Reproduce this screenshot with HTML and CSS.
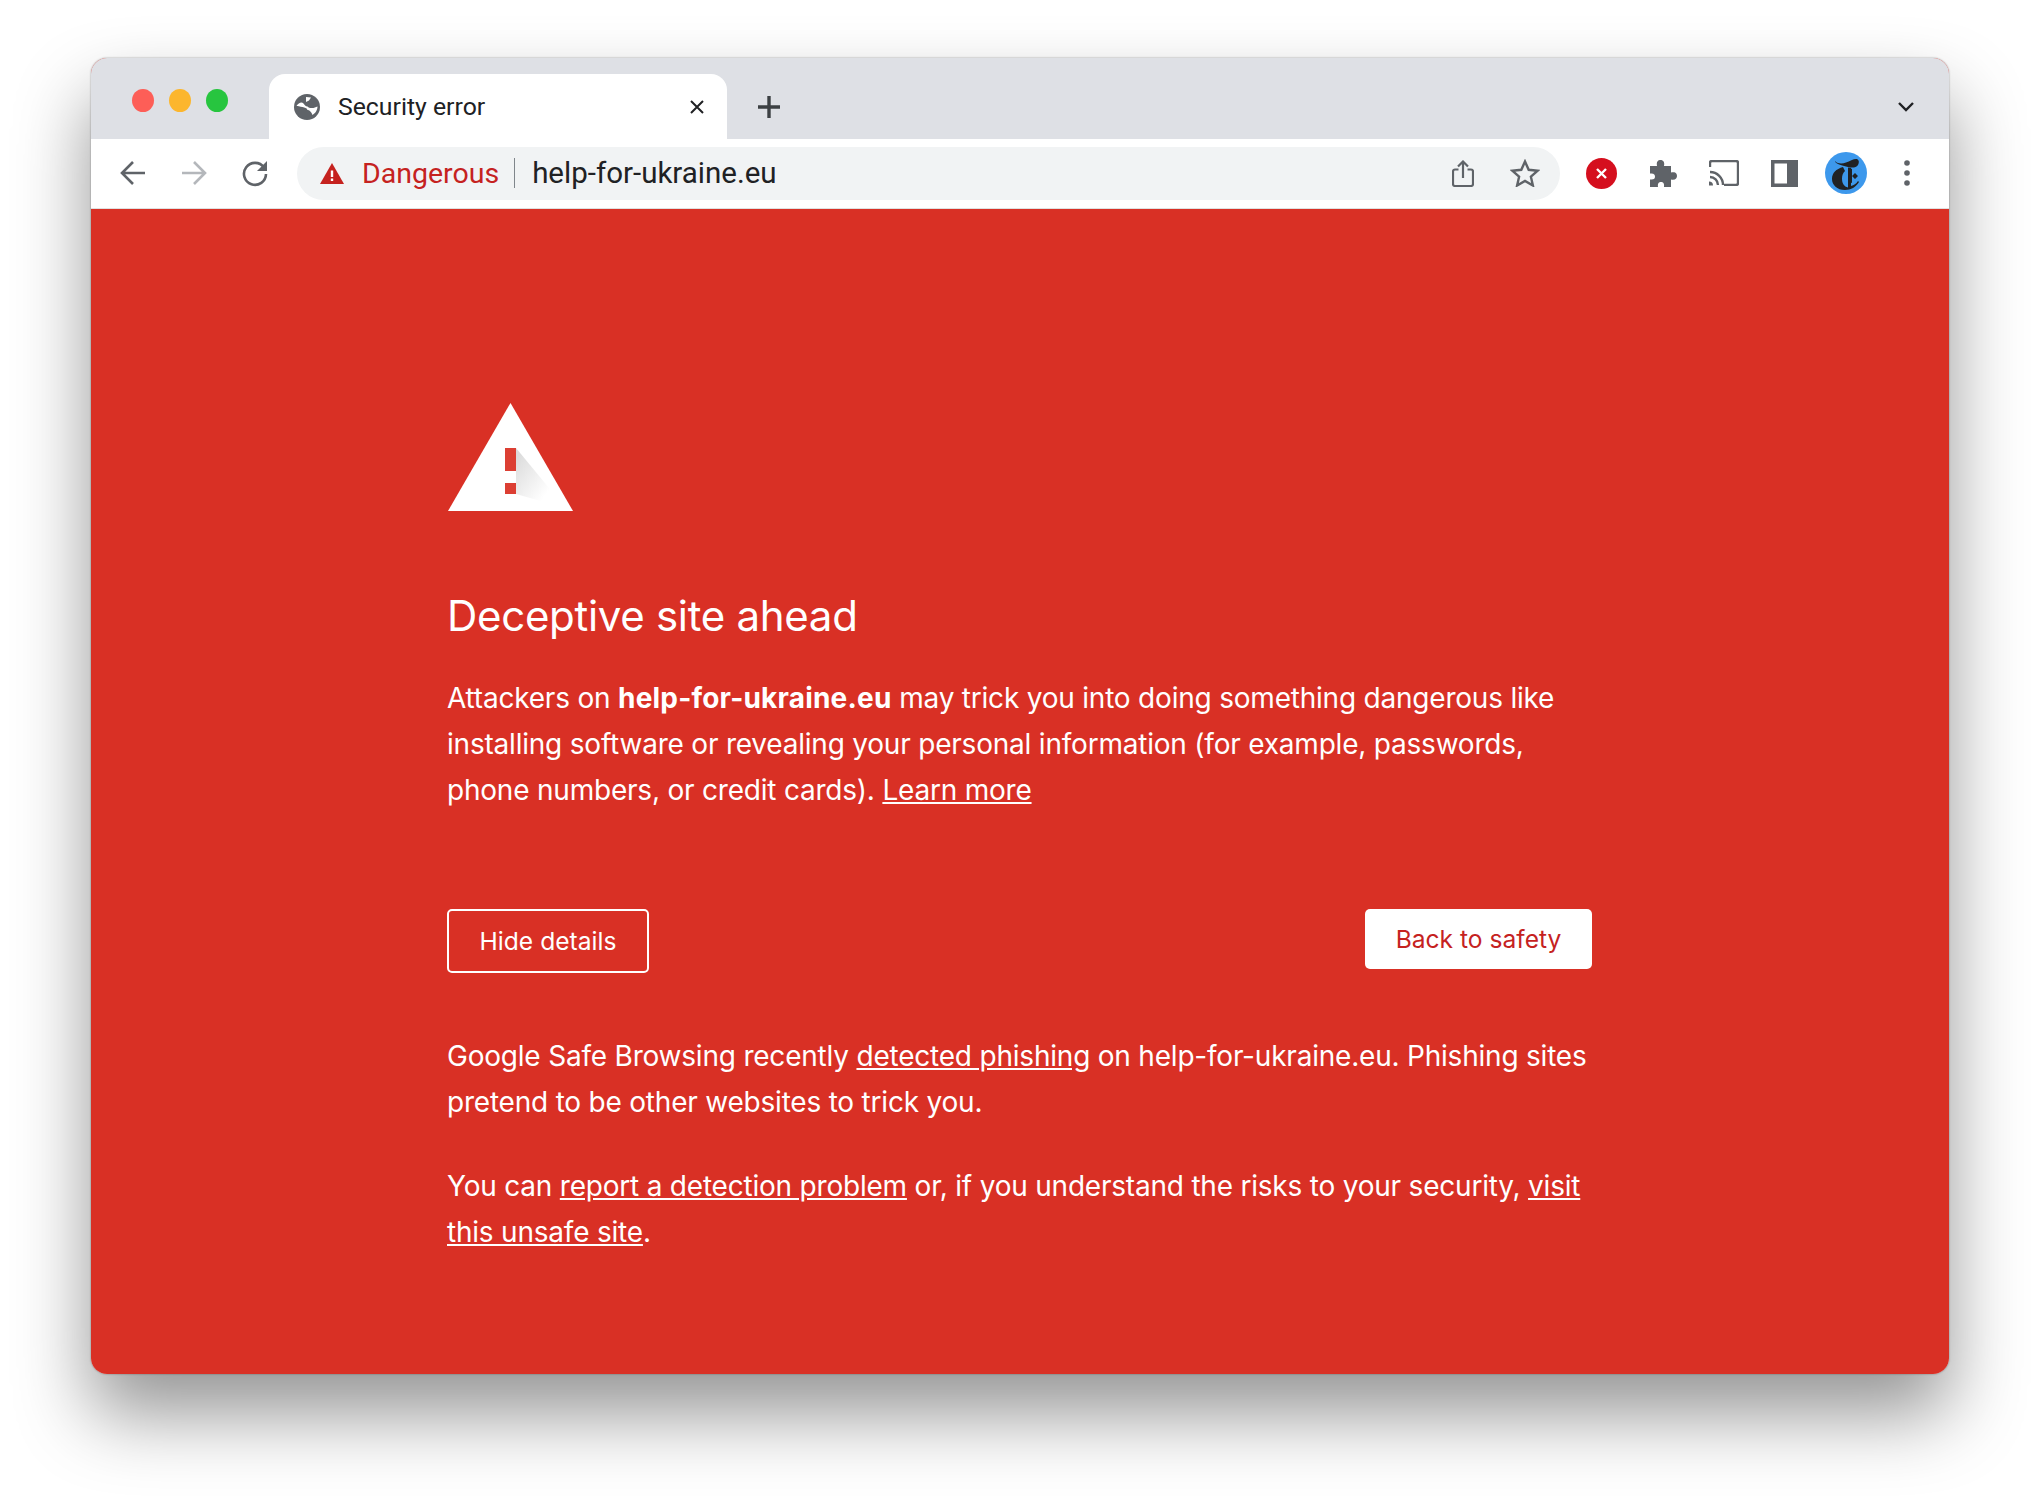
FILE: index.html
```html
<!DOCTYPE html>
<html lang="en">
<head>
    <meta charset="UTF-8">
    <title>Security error</title>
    <link rel="stylesheet" href="styles.css">
</head>
<body>
    <div class="window">
        <div class="tabstrip">
            <div class="lights">
                <span class="light red"></span>
                <span class="light yellow"></span>
                <span class="light green"></span>
            </div>
            <div class="tab">
                <svg class="globe" viewBox="0 0 26 26">
                    <circle cx="13" cy="13" r="13" fill="#5f6368"/>
                    <path d="M2.500 12c2-3 5-4.500 7-2.500 1 1 2 3 4 3 1.500 2 4 1.500 6 1.500l4-1.500c0 4-2.500 7-5 8.500-1-3-3-5-5-5-1-2.500-2.500-2-5-3-2.500-.5-5-1-6-1z" fill="#fff"/>
                    <path d="M12 3l5 .5-2 3-3 1.500z" fill="#fff"/>
                </svg>
                <span class="tab-title">Security error</span>
                <svg class="tab-close" viewBox="0 0 16 16">
                    <path d="M2 2l12 12M14 2L2 14" stroke="#202124" stroke-width="2" fill="none"/>
                </svg>
            </div>
            <svg class="new-tab" viewBox="0 0 24 24">
                <path d="M12 1v22M1 12h22" stroke="#3c4043" stroke-width="3.400" fill="none"/>
            </svg>
            <svg class="tab-search" viewBox="0 0 18 12">
                <path d="M2 2l7 7 7-7" stroke="#202124" stroke-width="2.400" fill="none"/>
            </svg>
        </div>

        <div class="toolbar">
            <div class="btn">
                <svg width="26" height="26" viewBox="0 0 26 26"><path d="M25 13H2M13 2L2 13l11 11" stroke="#5f6368" stroke-width="2.600" fill="none"/></svg>
            </div>
            <div class="btn">
                <svg width="26" height="26" viewBox="0 0 26 26"><path d="M1 13h23M13 2l11 11-11 11" stroke="#b4b7bb" stroke-width="2.600" fill="none"/></svg>
            </div>
            <div class="btn">
                <svg width="28" height="28" viewBox="0 0 28 28"><path d="M23 8.500A11 11 0 1 0 25 15" stroke="#5f6368" stroke-width="2.600" fill="none"/><path d="M26 2v10H16z" fill="#5f6368"/></svg>
            </div>

            <div class="omnibox">
                <svg class="warn" viewBox="0 0 24 21">
                    <path d="M12 0l12 21H0z" fill="#c5221f"/>
                    <path d="M10.800 7.500h2.400v6.500h-2.400zM10.800 15.500h2.400v2.500h-2.400z" fill="#fff"/>
                </svg>
                <span class="danger">Dangerous</span>
                <span class="sep"></span>
                <span class="url">help-for-ukraine.eu</span>
                <svg class="omni-icon share" width="22" height="27" viewBox="0 0 22 27">
                    <path d="M6.500 9.500H3a2 2 0 0 0-2 2V24a2 2 0 0 0 2 2h16a2 2 0 0 0 2-2V11.500a2 2 0 0 0-2-2h-3.500M11 18V2M6 6.500L11 1.500l5 5" stroke="#5f6368" stroke-width="2.200" fill="none"/>
                </svg>
                <svg class="omni-icon star" width="30" height="28" viewBox="0 0 30 28">
                    <path d="M15 2.500l3.700 8.300 9 .9-6.800 6 2 8.800-7.900-4.600-7.900 4.600 2-8.800-6.800-6 9-.9z" stroke="#5f6368" stroke-width="2.400" fill="none"/>
                </svg>
            </div>

            <div class="btn">
                <svg width="31" height="31" viewBox="0 0 31 31"><circle cx="15.500" cy="15.500" r="15.500" fill="#d50f1e"/><path d="M11 11l9 9M20 11l-9 9" stroke="#fff" stroke-width="2.400" fill="none"/></svg>
            </div>
            <div class="btn">
                <svg width="28" height="27" viewBox="0 0 28 27"><path d="M1 6h7c-1-5 1.500-6 3.500-6s4.500 1.500 3.500 6h7v6.500c5-1 6 1.500 6 3.500s-1.500 4.500-6 3.500V27h-7c.5-4-1-5-3-5s-3.500 1-3 5H1v-7.500c4 .5 5-1 5-3s-1-3.500-5-3z" fill="#5f6368"/></svg>
            </div>
            <div class="btn">
                <svg width="30" height="26" viewBox="0 0 30 26"><path d="M1 7V3a2 2 0 0 1 2-2h24a2 2 0 0 1 2 2v20a2 2 0 0 1-2 2H15" stroke="#5f6368" stroke-width="2.400" fill="none"/><path d="M1 12a13 13 0 0 1 13 13M1 17a8 8 0 0 1 8 8" stroke="#5f6368" stroke-width="2.400" fill="none"/><path d="M0 21.500a4 4 0 0 1 4 4H0z" fill="#5f6368"/></svg>
            </div>
            <div class="btn">
                <svg width="27" height="27" viewBox="0 0 27 27"><path d="M0 0h27v27H0zM3.500 3.500v20H16v-20z" fill="#5f6368" fill-rule="evenodd"/></svg>
            </div>
            <div class="btn">
                <svg width="42" height="42" viewBox="0 0 42 42">
                    <circle cx="21" cy="21" r="21" fill="#3d98ec"/>
                    <path d="M10 9c3 3 7 3 11 1.500 4-1.500 8-4 11-3.500 2 1 2.500 3 1 6-2 3-6 3-10 2-4-1-8-2-10-3-2-1-3-2-3-3z" fill="#202124"/>
                    <path d="M18 15c-7 2-11 6-11 12 0 6 5 11 13 11 6 0 11-3 14-8l-1-1c-2 3-4 4-7 5V16l-3-.5v20c-4-1-6-4-6-9 0-3 1-6 3-7.500z" fill="#202124"/>
                    <path d="M27 16.500l-1.500 1v14l1.500-1zM30 21l3 3-3 3-3-3z" fill="#202124"/>
                </svg>
            </div>
            <div class="btn">
                <svg width="6" height="26" viewBox="0 0 6 26"><circle cx="3" cy="3" r="2.800" fill="#5f6368"/><circle cx="3" cy="13" r="2.800" fill="#5f6368"/><circle cx="3" cy="23" r="2.800" fill="#5f6368"/></svg>
            </div>
        </div>

        <div class="page">
            <svg class="big-warn" width="125" height="108" viewBox="0 0 125 108">
                <defs>
                    <linearGradient id="warnShadow" x1="0.1" y1="0.1" x2="0.8" y2="0.85">
                        <stop offset="0" stop-color="#dcdcdc"/>
                        <stop offset="1" stop-color="#fff"/>
                    </linearGradient>
                </defs>
                <path d="M62.500 0L125 108H0z" fill="#fff"/>
                <path d="M68 45l38 46-10 8-28-8z" fill="url(#warnShadow)"/>
                <path d="M57 45h11v23H57zM57 80h11v11H57z" fill="#dc3f33"/>
            </svg>
            <h1>Deceptive site ahead</h1>
            <p class="intro">Attackers on <strong>help-for-ukraine.eu</strong> may trick you into doing something dangerous like installing software or revealing your personal information (for example, passwords, phone numbers, or credit cards). <a href="#">Learn more</a></p>
            <div class="actions">
                <button type="button" class="outline">Hide details</button>
                <button type="button" class="solid">Back to safety</button>
            </div>
            <p>Google Safe Browsing recently <a href="#">detected phishing</a> on help-for-ukraine.eu. Phishing sites pretend to be other websites to trick you.</p>
            <p class="last">You can <a href="#">report a detection problem</a> or, if you understand the risks to your security, <a href="#">visit this unsafe site</a>.</p>
        </div>
    </div>
</body>
</html>
```

FILE: styles.css
```css
body {
    margin: 0;
    padding: 58px 91px 128px;
    background-color: #fff;
    font-family: Inter, "Liberation Sans", sans-serif;
}
.window {
    height: 1316px;
    box-sizing: border-box;
    display: flex;
    flex-direction: column;
    border-radius: 16px;
    overflow: hidden;
    background-color: #d93025;
}
body::before {
    content: "";
    position: absolute;
    left: 91px;
    top: 58px;
    width: 1858px;
    height: 1316px;
    border-radius: 16px;
    box-shadow: 0 40px 75px rgba(0, 0, 0, 0.42), 0 0 2px rgba(0, 0, 0, 0.4);
    z-index: -1;
}
.tabstrip {
    height: 81px;
    display: flex;
    align-items: flex-start;
    background-color: #dee0e5;
}
.lights {
    display: flex;
    gap: 15.5px;
    padding: 31px 0 0 41px;
    width: 137px;
    box-sizing: border-box;
    flex-shrink: 0;
}
.light {
    width: 23px;
    height: 23px;
    border-radius: 50%;
}
.red { background-color: #fd5e57; }
.yellow { background-color: #fcb62d; }
.green { background-color: #27c53f; }
.tab {
    margin: 16px 0 0 41px;
    width: 458px;
    height: 65px;
    box-sizing: border-box;
    padding: 0 22px 0 25px;
    display: flex;
    align-items: center;
    background-color: #fff;
    border-radius: 16px 16px 0 0;
}
.globe {
    width: 26px;
    height: 26px;
    flex-shrink: 0;
}
.tab-title {
    margin-left: 18px;
    font-size: 24.8px;
    font-family: Roboto, sans-serif;
    color: #202124;
    flex: 1;
}
.tab-close {
    width: 16px;
    height: 16px;
}
.new-tab {
    width: 24px;
    height: 24px;
    margin: 37px 0 0 30px;
}
.tab-search {
    width: 18px;
    height: 12px;
    margin: 43px 34px 0 auto;
}
.toolbar {
    height: 70px;
    padding: 0 12px 1px 11px;
    box-sizing: border-box;
    display: flex;
    align-items: center;
    background-color: #fff;
    border-bottom: 1px solid #e0e0e0;
}
.btn {
    width: 61px;
    height: 61px;
    flex-shrink: 0;
    display: flex;
    align-items: center;
    justify-content: center;
}
.omnibox {
    flex: 1;
    height: 53px;
    margin: 0 11px 0 12px;
    padding: 0 20px 0 23px;
    display: flex;
    align-items: center;
    background-color: #f1f3f4;
    border-radius: 27px;
    font-family: Roboto, sans-serif;
    font-size: 28.5px;
}
.warn {
    width: 24px;
    height: 21px;
    flex-shrink: 0;
}
.danger {
    margin-left: 18px;
    color: #c5221f;
}
.sep {
    width: 1px;
    height: 30px;
    margin: 0 17px 0 15px;
    background-color: #80868b;
}
.url {
    flex: 1;
    font-size: 29.5px;
    color: #202124;
}
.omni-icon {
    flex-shrink: 0;
}
.star {
    margin-left: 36px;
}
.page {
    flex: 1;
    padding: 194px 357px 0 356px;
    color: #fff;
    font-size: 28px;
    line-height: 46px;
    letter-spacing: -0.21px;
}
.big-warn {
    display: block;
    margin-left: 1px;
}
h1 {
    margin: 75px 0 29px;
    font-size: 42px;
    line-height: 60px;
    font-weight: 400;
    letter-spacing: -0.3px;
}
p {
    margin: 0 0 38px;
}
strong {
    letter-spacing: 0.2px;
}
a {
    color: #fff;
}
.intro {
    margin-bottom: 96px;
}
.actions {
    display: flex;
    justify-content: space-between;
    align-items: flex-start;
    margin-bottom: 60px;
}
button {
    font-family: inherit;
    font-size: 24.6px;
    border-radius: 5px;
}
.outline {
    width: 202px;
    height: 64px;
    background-color: transparent;
    border: 2px solid #fff;
    color: #fff;
}
.solid {
    width: 227px;
    height: 60px;
    background-color: #fff;
    border: none;
    color: #c5221f;
}
```
